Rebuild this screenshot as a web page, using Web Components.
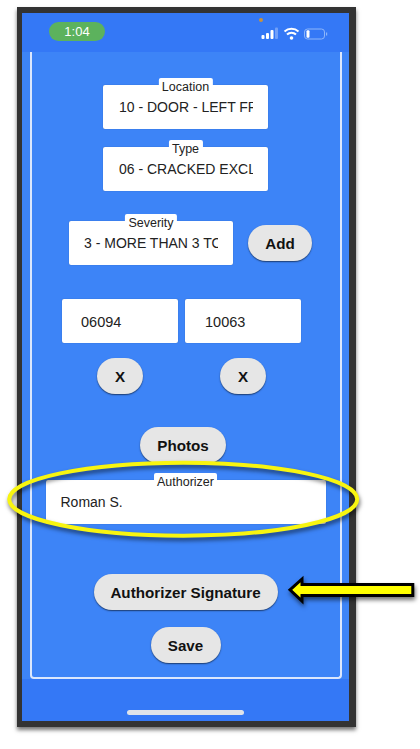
<!DOCTYPE html>
<html>
<head>
<meta charset="utf-8">
<style>
  html, body { margin:0; padding:0; background:#fff; }
  body { font-family:"Liberation Sans", Arial, sans-serif; width:420px; height:749px; overflow:hidden; position:relative; }
</style>
</head>
<body>
<phone-frame>
  <status-bar slot="status" time="1:04"></status-bar>
  <form-panel>
    <text-field label="Location" value="10 - DOOR - LEFT FR" style="width:165px"></text-field>
    <text-field label="Type" value="06 - CRACKED EXCL" style="width:165px;margin-top:18px"></text-field>
    <div style="display:flex;align-items:center;gap:15px;margin:30px 0 0 10px">
      <text-field label="Severity" value="3 - MORE THAN 3 TO" style="width:164px" pad="15"></text-field>
      <pill-button style="width:64px">Add</pill-button>
    </div>
    <div style="display:grid;grid-template-columns:116px 116px;gap:15px 7px;margin:34px 8px 0 0;justify-items:center;--field-size:14.5px;--field-line:46px">
      <text-field value="06094" style="width:116px" pad="19"></text-field>
      <text-field value="10063" style="width:116px" pad="20"></text-field>
      <pill-button style="width:46px">X</pill-button>
      <pill-button style="width:46px">X</pill-button>
    </div>
    <pill-button style="width:86px;margin:33px 5px 0 0">Photos</pill-button>
    <text-field label="Authorizer" value="Roman S." style="width:280px;margin-top:17px" pad="15"></text-field>
    <pill-button style="width:184px;margin-top:50px">Authorizer Signature</pill-button>
    <pill-button style="width:70px;margin-top:17px">Save</pill-button>
  </form-panel>
</phone-frame>
<callout-ellipse></callout-ellipse>
<callout-arrow></callout-arrow>

<script>
class PhoneFrame extends HTMLElement {
  connectedCallback() {
    this.attachShadow({ mode: 'open' });
    this.shadowRoot.innerHTML = `
      <style>
        :host {
          display:flex; flex-direction:column; box-sizing:border-box;
          width:339px; height:720px; margin:7px 0 0 17px;
          border:solid #333; border-width:6px 7px 6px 5px;
          background:#3478f6;
          box-shadow:0 3px 4px rgba(0,0,0,.55);
        }
        .home { flex:none; width:117px; height:5px; margin:31px 0 0 105px; border-radius:3px; background:#dfe3ea; }
      </style>
      <slot name="status"></slot>
      <slot></slot>
      <div class="home"></div>
    `;
  }
}
customElements.define('phone-frame', PhoneFrame);

class StatusBar extends HTMLElement {
  connectedCallback() {
    this.attachShadow({ mode: 'open' });
    this.shadowRoot.innerHTML = `
      <style>
        :host { display:flex; align-items:flex-start; height:39px; flex:none; position:relative; }
        .time {
          width:56px; height:19px; margin:9px 0 0 27px; border-radius:10px;
          background:#5cb25d; color:#fff; font-size:13px; line-height:19px; text-align:center;
        }
        .dot { position:absolute; left:237px; top:5px; width:4px; height:4px; border-radius:50%; background:#c8923c; }
        svg { position:absolute; left:239px; top:13px; }
      </style>
      <div class="time">${this.getAttribute('time')}</div>
      <div class="dot"></div>
      <svg width="70" height="16" viewBox="0 0 70 16">
        <g fill="#fff">
          <rect x="0.500" y="9" width="3" height="4" rx="1"/>
          <rect x="5" y="7" width="3" height="6" rx="1"/>
          <rect x="9.500" y="4" width="3" height="9" rx="1"/>
          <rect x="14" y="1.500" width="3" height="11.500" rx="1" opacity=".3"/>
        </g>
        <g fill="none" stroke="#fff" stroke-width="2">
          <path d="M23.500 5.500a10.500 10.500 0 0 1 14 0"/>
          <path d="M26 8.500a6.500 6.500 0 0 1 9 0"/>
        </g>
        <circle cx="30.500" cy="12" r="1.800" fill="#fff"/>
        <rect x="43.500" y="3" width="20" height="10" rx="3" fill="none" stroke="#8db6fa" stroke-width="1"/>
        <rect x="45.500" y="4.300" width="3" height="7.500" rx="1" fill="#fff"/>
        <rect x="65" y="6.500" width="1.200" height="3" fill="#8db6fa"/>
      </svg>
    `;
  }
}
customElements.define('status-bar', StatusBar);

class FormPanel extends HTMLElement {
  connectedCallback() {
    this.attachShadow({ mode: 'open' });
    this.shadowRoot.innerHTML = `
      <style>
        :host { display:block; flex:none; height:627px; background:#3d84f7; }
        .box {
          display:flex; flex-direction:column; align-items:center; box-sizing:border-box;
          height:627px; margin:0 7.500px; padding-top:33px;
          border:solid #dbe7fd; border-width:0 2px 2px; border-radius:0 0 4px 4px;
        }
      </style>
      <div class="box"><slot></slot></div>
    `;
  }
}
customElements.define('form-panel', FormPanel);

class TextField extends HTMLElement {
  connectedCallback() {
    const label = this.getAttribute('label');
    const pad = this.getAttribute('pad') || 16;
    this.attachShadow({ mode: 'open' });
    this.shadowRoot.innerHTML = `
      <style>
        :host { display:block; position:relative; flex:none; }
        .input {
          box-sizing:border-box; height:44px; padding:0 15px 0 ${pad}px; background:#fff;
          border-radius:2px; box-shadow:0 0 1px rgba(20,40,80,.5);
          color:#222; font-size:var(--field-size, 14px); line-height:var(--field-line, 44px); white-space:nowrap;
        }
        .clip { overflow:hidden; }
        .label {
          position:absolute; left:50%; top:-7px; transform:translateX(-50%);
          padding:0 3.500px; background:#fff; border-radius:2px 2px 0 0;
          color:#222; font-size:12.500px; line-height:18px; white-space:nowrap;
        }
      </style>
      <div class="input"><div class="clip">${this.getAttribute('value')}</div></div>
      ${label ? `<div class="label">${label}</div>` : ''}
    `;
  }
}
customElements.define('text-field', TextField);

class PillButton extends HTMLElement {
  connectedCallback() {
    this.attachShadow({ mode: 'open' });
    this.shadowRoot.innerHTML = `
      <style>
        :host {
          display:flex; align-items:center; justify-content:center; flex:none;
          height:36px; border-radius:18px; background:#e6e6e6;
          box-shadow:0 1px 1.500px rgba(0,0,0,.55);
          color:#111; font-size:15.200px; font-weight:700; white-space:nowrap;
        }
      </style>
      <slot></slot>
    `;
  }
}
customElements.define('pill-button', PillButton);

class CalloutEllipse extends HTMLElement {
  connectedCallback() {
    this.attachShadow({ mode: 'open' });
    this.shadowRoot.innerHTML = `
      <style>
        :host { position:absolute; left:0; top:450px; width:372px; height:100px; pointer-events:none; }
        svg { display:block; overflow:visible; filter:drop-shadow(1px 3px 2px rgba(0,0,0,.55)); }
      </style>
      <svg width="372" height="100" viewBox="0 0 372 100">
        <ellipse cx="183.200" cy="49.200" rx="174" ry="36.500" fill="none" stroke="#f8f510" stroke-width="4"/>
      </svg>
    `;
  }
}
customElements.define('callout-ellipse', CalloutEllipse);

class CalloutArrow extends HTMLElement {
  connectedCallback() {
    this.attachShadow({ mode: 'open' });
    this.shadowRoot.innerHTML = `
      <style>
        :host { position:absolute; left:284px; top:572px; width:134px; height:38px; pointer-events:none; }
        svg { display:block; overflow:visible; filter:drop-shadow(1px 3px 2px rgba(0,0,0,.55)); }
      </style>
      <svg width="134" height="38" viewBox="0 0 134 38">
        <path d="M6 17.800L18 7V12.500H128.800V23.500H18V29z" fill="#ffff00" stroke="#000" stroke-width="3" stroke-linejoin="miter"/>
      </svg>
    `;
  }
}
customElements.define('callout-arrow', CalloutArrow);
</script>
</body>
</html>
